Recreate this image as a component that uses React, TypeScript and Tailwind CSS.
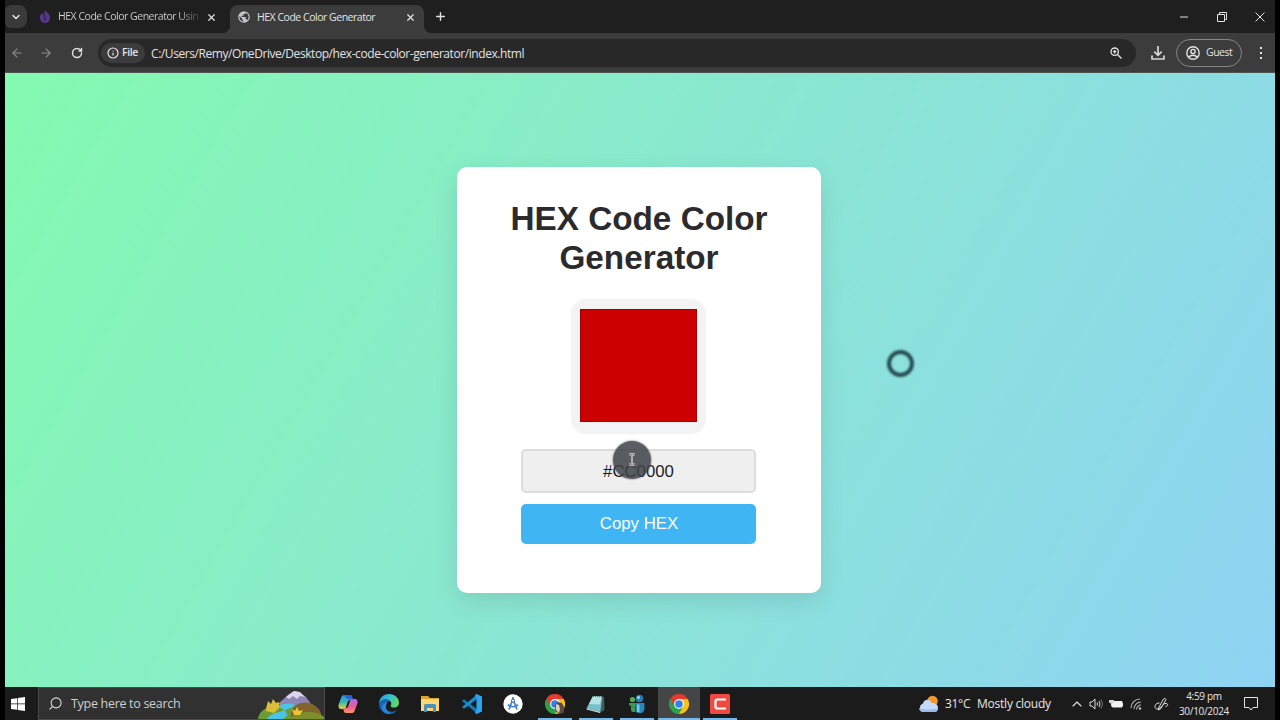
import { ReactNode } from "react";
import {
  ArrowLeft,
  ArrowRight,
  ChevronDown,
  ChevronUp,
  Info,
  Minus,
  Plus,
  RotateCw,
  Search,
  X,
} from "lucide-react";

const HEX = "#CC0000";

const GlobeIcon = () => (
  <svg viewBox="0 0 24 24" className="h-3.5 w-3.5 shrink-0 fill-[#c4c6c8]">
    <path d="M12 2a10 10 0 1 0 0 20 10 10 0 0 0 0-20zM4.2 12c0-.6.1-1.1.2-1.700L9 15v1c0 1.100.9 2 2 2v1.900A7.900 7.900 0 0 1 4.200 12zm13.700 5.400c-.3-.8-1-1.400-1.900-1.400h-1v-3c0-.6-.4-1-1-1H8v-2h2c.6 0 1-.4 1-1V7h2c1.100 0 2-.9 2-2v-.4a8 8 0 0 1 2.900 12.800z" />
  </svg>
);

const FlameIcon = () => (
  <svg viewBox="0 0 14 16" className="h-3.5 w-3 shrink-0">
    <path d="M7 0c1 2 6 4 6 9a6 6 0 0 1-12 0c0-3 1-4 2-5l1 1C5 4 7 2 7 0z" fill="#55388c" />
    <path d="M6.500 3c-2 3 2 5 0 9" fill="none" stroke="#2b2140" strokeWidth="1.400" />
  </svg>
);

const TabBar = () => (
  <div className="flex h-[33px] items-end bg-[#1f1f1f] text-[#e3e3e3]">
    <div className="mb-[5px] flex h-[23px] w-[22px] items-center justify-center rounded-r-lg rounded-l-md bg-[#3a3a3a]">
      <ChevronDown className="h-3 w-3" strokeWidth={3} />
    </div>
    <div className="flex h-8 w-[192px] items-center pl-3">
      <FlameIcon />
      <span className="ml-[7px] w-[141px] bg-linear-to-r from-[#d4d4d4] from-85% to-[#3a3a3a] bg-clip-text text-[10.500px] tracking-[-0.480px] whitespace-nowrap text-transparent">
        HEX Code Color Generator Usin
      </span>
      <X className="ml-[7px] h-[11px] w-[11px] shrink-0" strokeWidth={2.6} />
    </div>
    <div className="relative ml-[11px] flex h-7 w-[194px] items-center rounded-t-lg bg-[#3c3c3c] pb-1 pl-[7px]">
      <div className="absolute bottom-0 -left-2 h-2 w-2 bg-[radial-gradient(circle_at_0_0,transparent_8px,#3c3c3c_8.500px)]" />
      <div className="absolute -right-2 bottom-0 h-2 w-2 bg-[radial-gradient(circle_at_100%_0,transparent_8px,#3c3c3c_8.500px)]" />
      <GlobeIcon />
      <span className="ml-[6px] flex-1 pt-px text-[10.500px] tracking-[-0.480px] whitespace-nowrap">
        HEX Code Color Generator
      </span>
      <X className="mr-[8px] h-[11px] w-[11px]" strokeWidth={2.6} />
    </div>
    <Plus className="mb-[10px] ml-[10px] h-[13px] w-[13px]" strokeWidth={2.6} />
    <div className="mb-[10px] ml-auto flex items-center gap-[26px] pr-[9px]">
      <Minus className="h-3 w-3" strokeWidth={2} />
      <svg viewBox="0 0 12 12" className="h-3 w-3 fill-none stroke-[#e3e3e3]">
        <path d="M1.500 3.500h7v7h-7zM3.500 3.500v-2h7v7h-2" />
      </svg>
      <svg viewBox="0 0 12 12" className="h-3 w-3 fill-none stroke-[#e3e3e3]">
        <path d="M1.500 1.500l9 9M10.500 1.500l-9 9" />
      </svg>
    </div>
  </div>
);

const Toolbar = () => (
  <div className="flex h-10 items-center border-b border-[#4a5550] bg-[#3c3c3c] text-[#e3e3e3]">
    <ArrowLeft className="ml-[5px] h-[14px] w-[14px] text-[#8a8a8a]" strokeWidth={2} />
    <ArrowRight className="ml-[15px] h-[14px] w-[14px] text-[#8a8a8a]" strokeWidth={2} />
    <RotateCw className="ml-[18px] h-3 w-3" strokeWidth={2.8} />
    <div className="ml-[15px] flex h-[28px] w-[1038px] items-center rounded-full bg-[#282828] pl-[3px]">
      <div className="flex h-5 w-[44px] items-center rounded-full bg-[#3c3c3c] pl-[6px]">
        <Info className="h-3 w-3" strokeWidth={2.4} />
        <span className="ml-[3px] text-[10.500px] font-semibold tracking-[-0.400px]">File</span>
      </div>
      <span className="ml-[6px] pt-[2px] text-[12px] tracking-[-0.430px] whitespace-nowrap">
        C:/Users/Remy/OneDrive/Desktop/hex-code-color-generator/index.html
      </span>
      <svg
        viewBox="0 0 12 12"
        className="mr-[14px] ml-auto h-3 w-3 fill-none stroke-[#e3e3e3]"
        strokeWidth="1.300"
      >
        <circle cx="4.700" cy="4.700" r="3.700" />
        <path d="M7.500 7.500l4 4M4.700 3v3.400M3 4.700h3.400" />
      </svg>
    </div>
    <svg
      viewBox="0 0 14 14"
      className="ml-[15px] h-[14px] w-[14px] fill-none stroke-[#d6d6d6]"
      strokeWidth="1.700"
    >
      <path d="M7 0v9M3.300 5.700L7 9.300l3.700-3.600M1 9.500V13h12V9.500" />
    </svg>
    <div className="ml-[11px] flex h-[28px] w-[66px] items-center rounded-full border border-[#858585] pl-[9px]">
      <svg
        viewBox="0 0 14 14"
        className="h-[14px] w-[14px] fill-none stroke-[#e3e3e3]"
        strokeWidth="1.400"
      >
        <circle cx="7" cy="7" r="6.200" />
        <circle cx="7" cy="5.500" r="2.100" />
        <path d="M2.800 11.200c2-2.600 6.400-2.600 8.400 0" />
      </svg>
      <span className="ml-[6px] text-[10.500px] tracking-[-0.500px]">Guest</span>
    </div>
    <div className="ml-[18px] flex flex-col gap-[3px]">
      <div className="h-[2px] w-[2px] bg-[#e3e3e3]" />
      <div className="h-[2px] w-[2px] bg-[#e3e3e3]" />
      <div className="h-[2px] w-[2px] bg-[#e3e3e3]" />
    </div>
  </div>
);

const Page = () => (
  <div className="relative flex h-[614px] items-center justify-center bg-[linear-gradient(120deg,#84fab0_0%,#8fd3f4_100%)] font-['Liberation_Sans',Arial,sans-serif]">
    <div className="mr-[2px] flex h-[426px] w-[364px] flex-col items-center rounded-[10px] bg-white pt-[33px] shadow-[0_8px_24px_rgba(0,0,0,0.1)]">
      <h1 className="text-center text-[33.300px] leading-[38.600px] font-bold text-[#2b2b2d]">
        HEX Code Color
        <br />
        Generator
      </h1>
      <div className="mt-[22px] mr-px flex h-[135px] w-[135px] items-center justify-center rounded-[16px] bg-[#f3f3f3] pb-[2px] shadow-[0_0_2px_rgba(243,243,243,1)]">
        <div className="h-[113px] w-[117px] border border-[#a50000] bg-[#cc0000]" />
      </div>
      <div className="mt-[15px] mr-px flex h-[44px] w-[235px] items-center justify-center rounded-[5px] border-2 border-[#dcdcdc] bg-[#efefef] pt-px text-[16.800px] text-[#1c1c1c]">
        {HEX}
      </div>
      <button className="mt-[11px] mr-px h-[40px] w-[235px] rounded-[5px] bg-[#3fb6f3] pb-px pl-px text-[16.800px] text-white">
        Copy HEX
      </button>
    </div>

    {/* pointer highlight and click ring */}
    <div className="absolute top-[368px] left-[608px] flex h-[38px] w-[38px] items-center justify-center rounded-full bg-[#3d4145]/85 pb-[2px] shadow-[0_0_2px_#3d4145]">
      <svg viewBox="0 0 8 14" className="h-[13px] w-[8px] fill-none">
        <path d="M1 1.500h2l1 1 1-1h2M4 2.500v9M1 12.500h2l1-1 1 1h2" stroke="#e8e8e8" strokeWidth="2.200" />
        <path d="M1 1.500h2l1 1 1-1h2M4 2.500v9M1 12.500h2l1-1 1 1h2" stroke="#4a4d50" strokeWidth="0.800" />
      </svg>
    </div>
    <div className="absolute top-[277px] left-[882px] h-[27px] w-[27px] rounded-full border-4 border-[#274a54] blur-[0.800px]" />
  </div>
);

const SearchArt = () => (
  <svg viewBox="0 0 66 28" className="h-[28px] w-[66px]">
    <path d="M20 13L31 3l5-3 5 1 7 5 7 10-12 6z" fill="#8f86b8" />
    <path d="M28 6l8-6 6 1 5 5-5-1-3 3-4-3-4 3z" fill="#ddd6ea" />
    <path d="M0 28c1-7 7-12 14-11l13-5 12 4-5 12z" fill="#6c9c35" />
    <path d="M8 20c0-4 1-6 2-10l3 3 2-5 3 4 3-1v6l-5 5z" fill="#d9bf35" />
    <path d="M34 19c4-9 20-11 28 1l3 8H32z" fill="#80652c" />
    <path d="M22 14c8-2 15-2 14 1-1 2-9 3-9 5s6 3-2 8H9c4-7 16-7 17-9 0-2-8-2-4-5z" fill="#4cc4e8" />
    <path d="M30 28c9-8 28-10 36-2v2z" fill="#7c8f2c" />
    <path d="M34 18l3 2 2-4 2 4 4-1-3 5h-6z" fill="#f0c52f" />
  </svg>
);

const CopilotIcon = () => (
  <svg viewBox="0 0 20 20" className="h-5 w-5">
    <defs>
      <linearGradient id="cpA" x1="0" y1="0" x2="0" y2="1">
        <stop offset="0" stopColor="#2a8be8" />
        <stop offset="0.5" stopColor="#35b8b0" />
        <stop offset="1" stopColor="#e9d232" />
      </linearGradient>
      <linearGradient id="cpB" x1="0" y1="0" x2="0" y2="1">
        <stop offset="0" stopColor="#b06bea" />
        <stop offset="0.6" stopColor="#ee5d91" />
        <stop offset="1" stopColor="#fb9a5d" />
      </linearGradient>
    </defs>
    <path d="M6 1h6c1.500 0 2 1 2.500 3l.5 2h-3c-1.500 0-2 1-2.500 2.500L8 13c-.5 1.500-1 2-2.500 2H3C1 15 0 13 .5 11L3 4c.6-2 1.500-3 3-3z" fill="url(#cpA)" />
    <path d="M14 19H8c-1.500 0-2-1-2.500-3L5 14h3c1.500 0 2-1 2.500-2.500L12 7c.5-1.500 1-2 2.500-2H17c2 0 3 2 2.500 4L17 16c-.6 2-1.500 3-3 3z" fill="url(#cpB)" />
    <path d="M6 1h6c1.500 0 2 1 2.500 3l.5 1.500L9 5z" fill="#2862d4" />
  </svg>
);

const EdgeIcon = () => (
  <svg viewBox="0 0 20 20" className="h-5 w-5">
    <defs>
      <linearGradient id="edA" x1="0" y1="0" x2="1" y2="0.4">
        <stop offset="0" stopColor="#1f9be6" />
        <stop offset="0.55" stopColor="#35c1cf" />
        <stop offset="1" stopColor="#5fd668" />
      </linearGradient>
    </defs>
    <path d="M0 10C0 4 4.500 0 10 0s10 4 10 8.500c0 3-2 5-5 5-2 0-3.500-.6-3.500-1.500 0-.7.8-.9.8-2.300C12.300 7 9.500 5.500 7 5.500 3 5.500.5 8 0 10z" fill="url(#edA)" />
    <path d="M0 10c.5-2.500 3-4.500 6.500-4.500 2 0 3.500.8 4.500 2-2.500-.3-4.500 1.500-4.500 4.500 0 3.600 3.500 6.500 8 5.500 1.500-.3 2.500-1 3.500-1.500-2 3-5 4-8 4C4.500 20 0 15.500 0 10z" fill="#1766b8" />
    <path d="M7.500 10c-2 5 1 9 5 9.500-4 1.500-9-1-9.500-5.500C2.800 11.500 5 9 8 8.500z" fill="#2787d8" />
  </svg>
);

const FolderIcon = () => (
  <svg viewBox="0 0 20 17" className="h-[17px] w-5">
    <path d="M1 1h7l2 2h9v13H1z" fill="#e0a526" />
    <path d="M1 4h18v12H1z" fill="#fcd775" />
    <path d="M4 17V10.500Q4 9 5.500 9h9Q16 9 16 10.500V17h-3v-4H7v4z" fill="#4b91bd" />
  </svg>
);

const CodeIcon = () => (
  <svg viewBox="0 0 20 20" className="h-5 w-5">
    <path d="M0 7l2-1.800L15 15v4.500z" fill="#1479b9" />
    <path d="M0 13l2 1.800L15 5V.5z" fill="#1b8bd0" />
    <path d="M14.500 0L20 2.500v15L14.500 20l-1.500-1 1.500-3.500v-11L13 1z" fill="#2aa5ee" />
  </svg>
);

const AndroidStudioIcon = () => (
  <svg viewBox="0 0 20 20" className="h-5 w-5">
    <circle cx="10" cy="10" r="9.700" fill="#fff" />
    <path d="M10 5L6 15.500M10 5l4 10.500M5 10.500c2 3 8 3 10 0M10 3v3" fill="none" stroke="#3c7bd0" strokeWidth="1.700" />
    <circle cx="10" cy="6.700" r="1.600" fill="#fff" stroke="#4a5f88" />
  </svg>
);

const ChromeIcon = ({ children }: { children?: ReactNode }) => (
  <svg viewBox="0 0 20 20" className="h-5 w-5">
    <path d="M10 10L1.300 5A10 10 0 0 1 18.700 5z" fill="#e33b2e" />
    <path d="M10 10l8.700-5A10 10 0 0 1 10 20z" fill="#fbc116" />
    <path d="M10 10l4 3-4 7A10 10 0 0 1 1.300 5z" fill="#2da04e" />
    <path d="M10 5h8.700L14.400 12.500z" fill="#fbc116" />
    <path d="M1.300 5l4.300 7.500L10 5z" fill="#e33b2e" />
    <path d="M1.300 5l4.300 7.500 2 1.500L4 16A10 10 0 0 1 1.300 5z" fill="#2da04e" />
    <circle cx="10" cy="10" r="4.900" fill="#fff" />
    <circle cx="10" cy="10" r="3.800" fill="#337fe8" />
    {children}
  </svg>
);

const NotepadIcon = () => (
  <svg viewBox="0 0 20 20" className="h-5 w-5">
    <path d="M15 2.500l3 .5.500 13-3.500 2z" fill="#3f6168" />
    <path d="M7 2l9 .5L14.500 18 .5 14.500z" fill="#78bfc9" />
    <path d="M7 2l9 .5-2 8L3 10z" fill="#b7e2e3" />
    <path d="M.5 14.500l14 3.500-.5 1-13.500-3.500z" fill="#e1e7dc" />
    <path d="M7 2.500l9 .5" stroke="#55656a" strokeDasharray="1 1" />
  </svg>
);

const PeopleIcon = () => (
  <svg viewBox="0 0 18 20" className="h-5 w-[18px]">
    <circle cx="4.500" cy="5.500" r="2.600" fill="#51ae4b" />
    <path d="M1 9h6.500v9H5q-2 0-2-2v-4.500H1z" fill="#3f9a4c" />
    <circle cx="11.500" cy="4.500" r="3.800" fill="#267bb4" />
    <circle cx="10.500" cy="3.500" r="1.400" fill="#a8dbed" />
    <path d="M7 9h9.500v5q0 4-3 5H10q-2 0-2-2v-5.500H7z" fill="#2689b9" />
    <path d="M9 10.500h2.500V18H9z" fill="#79c9df" />
  </svg>
);

const CamtasiaIcon = () => (
  <svg viewBox="0 0 20 20" className="h-5 w-5">
    <rect width="20" height="20" rx="1.500" fill="#ef4a40" />
    <path d="M16 5.500H7.500Q5.500 5.500 5.500 7.500v5q0 2 2 2H16" fill="none" stroke="#fff" strokeWidth="2.200" />
  </svg>
);

const apps: { icon: ReactNode; running?: boolean; active?: boolean }[] = [
  { icon: <CopilotIcon /> },
  { icon: <EdgeIcon /> },
  { icon: <FolderIcon /> },
  { icon: <CodeIcon /> },
  { icon: <AndroidStudioIcon /> },
  {
    icon: (
      <ChromeIcon>
        <path d="M10 11l3-3 4 1 2.500 5-1 5-4 1-4-3z" fill="#5b4a42" />
        <path d="M11 10l3 1 1 4-1 4-3-3z" fill="#d8cdbf" />
      </ChromeIcon>
    ),
    running: true,
  },
  { icon: <NotepadIcon />, running: true },
  { icon: <PeopleIcon />, running: true },
  { icon: <ChromeIcon />, running: true, active: true },
  { icon: <CamtasiaIcon />, running: true },
];

const AppButton = ({ app }: { app: (typeof apps)[number] }) => (
  <div
    className={`relative flex h-[33px] w-[41.400px] items-center justify-center ${
      app.active ? "bg-[#454545]" : ""
    }`}
  >
    {app.icon}
    {app.running && (
      <div
        className={`absolute bottom-0 h-[2px] bg-[#76b9ed] ${
          app.active ? "w-full" : "w-[34px]"
        }`}
      />
    )}
  </div>
);

const Tray = () => (
  <div className="ml-auto flex h-full items-center text-[#e6e6e6]">
    <svg viewBox="0 0 22 18" className="h-[18px] w-[22px]">
      <circle cx="14.500" cy="6" r="5.300" fill="#f29a2d" />
      <path d="M5 17a4.500 4.500 0 0 1 0-8.500C6 4 12 3.500 13.500 8c4-.5 7 2 6.500 5.500 0 2-1.500 3.500-3.500 3.500z" fill="#c5daf8" />
      <path d="M1 13c5 2 14 2 19 0 0 2.500-1.500 4-3.500 4H5c-2 0-4-1.500-4-4z" fill="#9dbbe9" />
    </svg>
    <span className="ml-[5px] w-[32px] text-[12px] tracking-[-0.300px] whitespace-nowrap">31°C</span>
    <span className="w-[92px] text-[12px] tracking-[-0.230px] whitespace-nowrap">Mostly cloudy</span>
    <ChevronUp className="h-4 w-4" strokeWidth={1.6} />
    <svg viewBox="0 0 14 12" className="ml-[4px] h-3 w-[14px] fill-none stroke-[#dcdcdc]">
      <path d="M1 4h2l3-3v10L3 8H1zM8 4.500q1 1.500 0 3M10 3q2 3 0 6" />
      <path d="M12 1.500q3 4.500 0 9" opacity="0.500" />
    </svg>
    <svg viewBox="0 0 14 10" className="ml-[6px] h-[10px] w-[14px]">
      <path d="M3.500 2.500H13V8H3.500z" fill="#f2f2f2" stroke="#f2f2f2" />
      <path d="M13.500 4v3" stroke="#f2f2f2" />
      <path d="M0 1h5v2.500L2.500 5 0 3.500z" fill="#d9d9d9" />
      <path d="M2.500 4.500v3" stroke="#d9d9d9" />
    </svg>
    <svg viewBox="0 0 12 12" className="ml-[7px] h-3 w-3 fill-none stroke-[#b8b8b8]" strokeWidth="1.100">
      <path d="M1 10A9 9 0 0 1 10 1M4 11a7 7 0 0 1 7-7M6.500 11.500A4.500 4.500 0 0 1 11 7" />
      <circle cx="10" cy="10.500" r="0.800" fill="#e8e8e8" />
    </svg>
    <svg viewBox="0 0 15 14" className="ml-[12px] h-[14px] w-[15px] fill-none stroke-[#dcdcdc]">
      <path d="M4.500 11l5-9q2-1.500 2.500.5l-5 9-2.500 1.500z" />
      <path d="M5.500 6C0 6 0 11.500 3 12s5-4.500 8-5.500c4-.5 3 3 .5 3" />
    </svg>
    <div className="ml-[7px] w-[56px] text-center text-[10px] leading-[15px] tracking-[-0.300px] whitespace-nowrap">
      <div>4:59 pm</div>
      <div>30/10/2024</div>
    </div>
    <svg viewBox="0 0 14 14" className="mr-[17px] ml-[12px] h-[14px] w-[14px] fill-none stroke-[#e6e6e6]">
      <path d="M.5.5h13v10H9L7 13l-2-2.500H.5z" />
    </svg>
  </div>
);

const Taskbar = () => (
  <div className="flex h-[33px] items-center bg-[#1b1b1b]">
    <div className="flex w-[33px] justify-center pr-[7px]">
      <svg viewBox="0 0 14 14" className="h-[14px] w-[14px] fill-white">
        <path d="M0 2l6-.8v5.400H0zM6.700 1.100L14 0v6.600H6.700zM0 7.300h6v5.500L0 12zM6.700 7.300H14V14l-7.300-1.100z" />
      </svg>
    </div>
    <div className="flex h-full w-[287px] items-center border border-[#4a4a4a] bg-[#313131]">
      <Search className="ml-[9px] h-[15px] w-[15px] -scale-x-100 text-[#e0e0e0]" strokeWidth={1.7} />
      <span className="ml-[8px] pt-[2px] text-[12.500px] tracking-[-0.300px] whitespace-nowrap text-[#cfcfcf]">
        Type here to search
      </span>
      <div className="mt-auto ml-auto">
        <SearchArt />
      </div>
    </div>
    <div className="ml-[2px] flex">
      {apps.map((app, index) => (
        <AppButton key={index} app={app} />
      ))}
    </div>
    <Tray />
  </div>
);

export default function App() {
  return (
    <div className="h-[720px] w-[1280px] overflow-hidden bg-black px-[5px] font-['Open_Sans','Noto_Sans',sans-serif]">
      <TabBar />
      <Toolbar />
      <Page />
      <Taskbar />
    </div>
  );
}
